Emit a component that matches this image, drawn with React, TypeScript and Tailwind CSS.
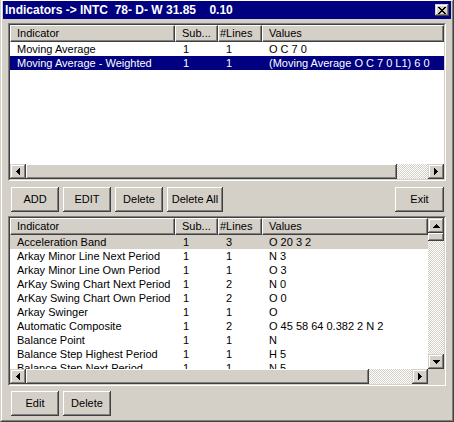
import React from "react";

const RAISED =
  "bg-[#d4d0c8] shadow-[inset_-1px_-1px_#404040,inset_1px_1px_#d4d0c8,inset_-2px_-2px_#808080,inset_2px_2px_#fff]";
const BUTTON =
  "bg-[#d4d0c8] shadow-[inset_-1px_-1px_#404040,inset_1px_1px_#fff,inset_-2px_-2px_#808080,inset_2px_2px_#d4d0c8]";
const CHECK =
  "bg-[repeating-conic-gradient(#fff_0_25%,#d4d0c8_0_50%)] bg-[length:2px_2px]";

function Tri({ dir }: { dir: "l" | "r" | "u" | "d" }) {
  if (dir === "l" || dir === "r") {
    const xs = dir === "l" ? [3, 2, 1, 0] : [0, 1, 2, 3];
    return (
      <svg width="4" height="7" shapeRendering="crispEdges">
        <rect x={xs[0]} y={0} width={1} height={7} />
        <rect x={xs[1]} y={1} width={1} height={5} />
        <rect x={xs[2]} y={2} width={1} height={3} />
        <rect x={xs[3]} y={3} width={1} height={1} />
      </svg>
    );
  }
  const ys = dir === "u" ? [3, 2, 1, 0] : [0, 1, 2, 3];
  return (
    <svg width="7" height="4" shapeRendering="crispEdges">
      <rect x={0} y={ys[0]} width={7} height={1} />
      <rect x={1} y={ys[1]} width={5} height={1} />
      <rect x={2} y={ys[2]} width={3} height={1} />
      <rect x={3} y={ys[3]} width={1} height={1} />
    </svg>
  );
}

function Sunken({ className, children }: { className: string; children: React.ReactNode }) {
  return (
    <div
      className={`${className} border border-t-[#808080] border-l-[#808080] border-r-white border-b-white`}
    >
      <div className="h-full w-full border border-t-[#404040] border-l-[#404040] border-r-[#d4d0c8] border-b-[#d4d0c8] flex flex-col overflow-hidden">
        {children}
      </div>
    </div>
  );
}

const HCELL =
  "h-full border border-t-white border-l-white border-r-[#404040] border-b-[#404040] shadow-[inset_-1px_-1px_#808080] leading-[15px] overflow-hidden whitespace-nowrap shrink-0";

function HeaderRow() {
  return (
    <div className="flex h-[17px] shrink-0 bg-[#d4d0c8]">
      <div className={`${HCELL} w-[165px] pl-[6px]`}>Indicator</div>
      <div className={`${HCELL} w-[43px] pl-[6px]`}>Sub...</div>
      <div className={`${HCELL} w-[44px] pl-[1px]`}>#Lines</div>
      <div className={`${HCELL} flex-1 pl-[6px]`}>Values</div>
    </div>
  );
}

type Row = [string, string, string, string];

function DataRow({ r, cls }: { r: Row; cls: string }) {
  return (
    <div className={`flex h-[14px] leading-[14px] whitespace-nowrap shrink-0 ${cls}`}>
      <div className="w-[165px] pl-[7px] shrink-0 overflow-hidden">{r[0]}</div>
      <div className="w-[43px] pl-[8px] shrink-0">{r[1]}</div>
      <div className="w-[44px] pl-[8px] shrink-0">{r[2]}</div>
      <div className="flex-1 pl-[7px] overflow-hidden">{r[3]}</div>
    </div>
  );
}

function HScroll({ thumb }: { thumb: string }) {
  return (
    <div className="flex h-[15px] shrink-0">
      <div className={`${RAISED} w-[16px] h-full flex items-center justify-center shrink-0`}>
        <Tri dir="l" />
      </div>
      <div className={`${BUTTON} ${thumb} h-full shrink-0`} />
      <div className={`${CHECK} flex-1 h-full`} />
      <div className={`${RAISED} w-[16px] h-full flex items-center justify-center shrink-0`}>
        <Tri dir="r" />
      </div>
    </div>
  );
}

const lower: Row[] = [
  ["Acceleration Band", "1", "3", "O 20 3 2"],
  ["Arkay Minor Line Next Period", "1", "1", "N 3"],
  ["Arkay Minor Line Own Period", "1", "1", "O 3"],
  ["ArKay Swing Chart Next Period", "1", "2", "N 0"],
  ["ArKay Swing Chart Own Period", "1", "2", "O 0"],
  ["Arkay Swinger", "1", "1", "O"],
  ["Automatic Composite", "1", "2", "O 45 58 64 0.382 2 N 2"],
  ["Balance Point", "1", "1", "N"],
  ["Balance Step Highest Period", "1", "1", "H 5"],
  ["Balance Step Next Period", "1", "1", "N 5"],
];

export default function App() {
  return (
    <div className="w-[454px] h-[422px] bg-[#d4d0c8] border-l border-r border-b border-l-[#d4d0c8] border-r-[#404040] border-b-[#404040] font-['Liberation_Sans',Arial,sans-serif] text-[11px] text-black select-none">
      <div className="h-full border border-t-white border-l-white border-r-[#808080] border-b-[#808080] px-px flex flex-col">
        {/* Title bar */}
        <div className="h-[18px] shrink-0 bg-[#000080] flex items-center pl-[2px] pr-[2px]">
          <div className="flex-1 text-white font-bold text-[12px] leading-[18px] whitespace-pre">
            {"Indicators -> INTC  78- D- W 31.85    0.10"}
          </div>
          <div className={`${RAISED} w-[14px] h-[12px] flex items-center justify-center`}>
            <svg width="8" height="7" shapeRendering="crispEdges">
              <rect x={0} y={0} width={2} height={1} />
              <rect x={6} y={0} width={2} height={1} />
              <rect x={1} y={1} width={2} height={1} />
              <rect x={5} y={1} width={2} height={1} />
              <rect x={2} y={2} width={4} height={1} />
              <rect x={3} y={3} width={2} height={1} />
              <rect x={2} y={4} width={4} height={1} />
              <rect x={1} y={5} width={2} height={1} />
              <rect x={5} y={5} width={2} height={1} />
              <rect x={0} y={6} width={2} height={1} />
              <rect x={6} y={6} width={2} height={1} />
            </svg>
          </div>
        </div>

        <div className="flex-1 flex flex-col px-[5px] pt-[4px]">
          {/* Top list */}
          <Sunken className="h-[158px] shrink-0">
            <HeaderRow />
            <div className="flex-1 bg-white flex flex-col">
              <DataRow r={["Moving Average", "1", "1", "O C 7 0"]} cls="" />
              <DataRow
                r={["Moving Average - Weighted", "1", "1", "(Moving Average O C 7 0 L1) 6 0"]}
                cls="bg-[#000080] text-white"
              />
            </div>
            <HScroll thumb="w-[371px]" />
          </Sunken>

          {/* Buttons */}
          <div className="flex h-[25px] mt-[6px] shrink-0 gap-[4px] pl-[3px] pr-[2px]">
            <div className={`${BUTTON} w-[48px] h-full flex items-center justify-center`}>ADD</div>
            <div className={`${BUTTON} w-[48px] h-full flex items-center justify-center`}>EDIT</div>
            <div className={`${BUTTON} w-[48px] h-full flex items-center justify-center`}>Delete</div>
            <div className={`${BUTTON} w-[56px] h-full flex items-center justify-center`}>Delete All</div>
            <div className={`${BUTTON} w-[49px] h-full flex items-center justify-center ml-auto`}>Exit</div>
          </div>

          {/* Lower list */}
          <Sunken className="h-[170px] mt-[4px] shrink-0">
            <div className="flex-1 flex min-h-0">
              <div className="flex-1 flex flex-col min-w-0">
                <HeaderRow />
                <div className="flex-1 bg-white flex flex-col overflow-hidden">
                  {lower.map((r, i) => (
                    <DataRow key={i} r={r} cls={i === 0 ? "bg-[#d4d0c8]" : ""} />
                  ))}
                </div>
              </div>
              <div className="w-[16px] flex flex-col shrink-0">
                <div className={`${RAISED} h-[15px] flex items-center justify-center shrink-0`}>
                  <Tri dir="u" />
                </div>
                <div className={`${BUTTON} h-[8px] shrink-0`} />
                <div className={`${CHECK} flex-1`} />
                <div className={`${RAISED} h-[15px] flex items-center justify-center shrink-0`}>
                  <Tri dir="d" />
                </div>
              </div>
            </div>
            <div className="flex shrink-0">
              <div className="flex-1 min-w-0">
                <HScroll thumb="w-[343px]" />
              </div>
              <div className="w-[16px] h-[15px] bg-[#d4d0c8] shrink-0" />
            </div>
          </Sunken>

          {/* Bottom buttons */}
          <div className="flex h-[25px] mt-[5px] shrink-0 gap-[4px] pl-[3px]">
            <div className={`${BUTTON} w-[48px] h-full flex items-center justify-center`}>Edit</div>
            <div className={`${BUTTON} w-[48px] h-full flex items-center justify-center`}>Delete</div>
          </div>
        </div>
      </div>
    </div>
  );
}
